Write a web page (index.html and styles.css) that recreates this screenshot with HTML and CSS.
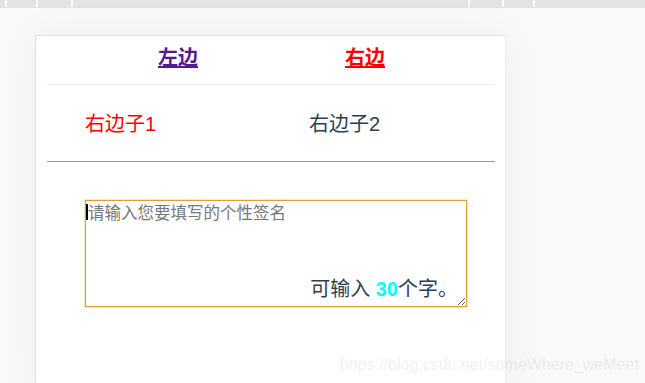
FILE: index.html
```html
<!DOCTYPE html>
<html lang="zh">
<head>
<meta charset="utf-8">
<title>个性签名</title>
<link rel="stylesheet" href="styles.css">
</head>
<body>
<div class="topbar">
  <span class="tick t1"></span>
  <span class="tick t2"></span>
  <span class="tick t3"></span>
  <span class="tick t4"></span>
  <span class="tick t5"></span>
  <span class="tick t6"></span>
</div>
<main class="card">
  <nav class="nav">
    <a href="#left" class="nav-link visited">左边</a>
    <a href="#right" class="nav-link active">右边</a>
  </nav>
  <div class="subnav">
    <span class="sub sub-active">右边子1</span>
    <span class="sub">右边子2</span>
  </div>
  <section class="sig">
    <div class="field">
      <textarea class="sig-input" placeholder="请输入您要填写的个性签名"></textarea>
      <span class="caret"></span>
      <span class="count">可输入 <b class="num">30</b>个字。</span>
    </div>
  </section>
</main>
<div class="watermark">https://blog.csdn.net/someWhere_weMeet</div>
</body>
</html>
```

FILE: styles.css
```css
html, body {
  margin: 0;
  padding: 0;
}

body {
  background: #f9f9f9;
  font-family: "Liberation Sans", "Noto Sans CJK SC", sans-serif;
  color: #2c3e50;
  height: 383px;
  overflow: hidden;
  position: relative;
}

.topbar {
  height: 8px;
  background: #e3e3e3;
  display: flex;
  align-items: flex-start;
}

.tick {
  width: 2px;
  height: 7px;
  background: #fafafa;
}

.t1 { margin-left: 5px; }
.t2 { margin-left: 29px; }
.t3 { margin-left: 33px; }
.t4 { margin-left: 395px; }
.t5 { margin-left: 32px; }
.t6 { margin-left: 29px; }

.card {
  margin: 27px 0 0 35px;
  width: 471px;
  height: 360px;
  box-sizing: border-box;
  background: #fff;
  border-top: 1px solid #e0e0e0;
  border-left: 1px solid #e0e0e0;
  border-right: 1px solid #eeeeee;
  padding: 0 10px 0 11px;
  box-shadow: 0 0 40px rgba(0, 0, 0, 0.05);
}

.nav {
  display: flex;
  padding: 12px 0 16px 111px;
  border-bottom: 1px solid #eeeeee;
  line-height: 20px;
}

.nav-link {
  font-size: 20px;
  font-weight: bold;
  text-decoration: underline;
}

.nav-link.visited {
  color: #551a8b;
}

.nav-link.active {
  color: #ff0000;
  margin-left: 147px;
}

.subnav {
  display: grid;
  grid-template-columns: 224px auto;
  padding: 29px 0 27px 38px;
  border-bottom: 1px solid #999999;
  font-size: 20px;
  line-height: 20px;
}

.sub-active {
  color: #ff0000;
}

.sig {
  padding: 38px 0 0 38px;
}

.field {
  position: relative;
  width: 382px;
  height: 107px;
}

.sig-input {
  display: block;
  width: 382px;
  height: 107px;
  box-sizing: border-box;
  margin: 0;
  padding: 2px;
  border: 1px solid #e09f30;
  box-shadow: 0 0 0 0.5px rgba(224, 159, 48, 0.5);
  border-radius: 0;
  outline: none;
  font-family: "Liberation Sans", "Noto Sans CJK SC", sans-serif;
  font-size: 16.5px;
  line-height: 20px;
  color: #2c3e50;
  background: #fff;
}

.sig-input::placeholder {
  color: #777777;
}

.caret {
  position: absolute;
  left: 1px;
  top: 4px;
  width: 2px;
  height: 16px;
  background: #000;
}

.count {
  position: absolute;
  right: 9px;
  bottom: 8px;
  font-size: 20px;
  line-height: 20px;
  color: #2c3e50;
  white-space: nowrap;
}

.num {
  color: #00ffff;
  font-weight: bold;
}

.watermark {
  position: absolute;
  left: 340px;
  top: 357px;
  font-family: "Liberation Sans", Arial, sans-serif;
  font-size: 16px;
  line-height: 16px;
  color: rgba(0, 0, 0, 0.08);
  white-space: nowrap;
}
```
